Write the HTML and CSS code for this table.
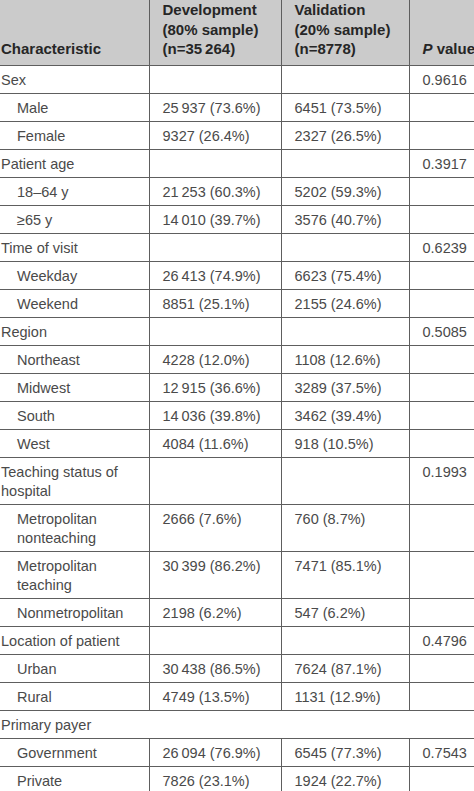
FILE: index.html
```html
<!DOCTYPE html>
<html>
<head>
<meta charset="utf-8">
<link rel="stylesheet" href="styles.css">
</head>
<body>
<table class="tbl">
  <colgroup>
    <col class="c1"><col class="c2"><col class="c3"><col class="c4">
  </colgroup>
  <thead>
    <tr>
      <th>Characteristic</th>
      <th>Development (80% sample) (n=35&#8201;264)</th>
      <th>Validation (20% sample) (n=8778)</th>
      <th class="pval"><i>P</i> value</th>
    </tr>
  </thead>
  <tbody>
    <tr><td class="grp">Sex</td><td></td><td></td><td>0.9616</td></tr>
    <tr><td class="sub">Male</td><td>25&#8201;937 (73.6%)</td><td>6451 (73.5%)</td><td></td></tr>
    <tr><td class="sub">Female</td><td>9327 (26.4%)</td><td>2327 (26.5%)</td><td></td></tr>
    <tr><td class="grp">Patient age</td><td></td><td></td><td>0.3917</td></tr>
    <tr><td class="sub">18–64 y</td><td>21&#8201;253 (60.3%)</td><td>5202 (59.3%)</td><td></td></tr>
    <tr><td class="sub">≥65 y</td><td>14&#8201;010 (39.7%)</td><td>3576 (40.7%)</td><td></td></tr>
    <tr><td class="grp">Time of visit</td><td></td><td></td><td>0.6239</td></tr>
    <tr><td class="sub">Weekday</td><td>26&#8201;413 (74.9%)</td><td>6623 (75.4%)</td><td></td></tr>
    <tr><td class="sub">Weekend</td><td>8851 (25.1%)</td><td>2155 (24.6%)</td><td></td></tr>
    <tr><td class="grp">Region</td><td></td><td></td><td>0.5085</td></tr>
    <tr><td class="sub">Northeast</td><td>4228 (12.0%)</td><td>1108 (12.6%)</td><td></td></tr>
    <tr><td class="sub">Midwest</td><td>12&#8201;915 (36.6%)</td><td>3289 (37.5%)</td><td></td></tr>
    <tr><td class="sub">South</td><td>14&#8201;036 (39.8%)</td><td>3462 (39.4%)</td><td></td></tr>
    <tr><td class="sub">West</td><td>4084 (11.6%)</td><td>918 (10.5%)</td><td></td></tr>
    <tr><td class="grp">Teaching status of hospital</td><td></td><td></td><td>0.1993</td></tr>
    <tr><td class="sub">Metropolitan nonteaching</td><td>2666 (7.6%)</td><td>760 (8.7%)</td><td></td></tr>
    <tr><td class="sub">Metropolitan teaching</td><td>30&#8201;399 (86.2%)</td><td>7471 (85.1%)</td><td></td></tr>
    <tr><td class="sub">Nonmetropolitan</td><td>2198 (6.2%)</td><td>547 (6.2%)</td><td></td></tr>
    <tr><td class="grp">Location of patient</td><td></td><td></td><td>0.4796</td></tr>
    <tr><td class="sub">Urban</td><td>30&#8201;438 (86.5%)</td><td>7624 (87.1%)</td><td></td></tr>
    <tr><td class="sub">Rural</td><td>4749 (13.5%)</td><td>1131 (12.9%)</td><td></td></tr>
    <tr class="span-row"><td class="grp" colspan="4">Primary payer</td></tr>
    <tr><td class="sub">Government</td><td>26&#8201;094 (76.9%)</td><td>6545 (77.3%)</td><td>0.7543</td></tr>
    <tr><td class="sub">Private</td><td>7826 (23.1%)</td><td>1924 (22.7%)</td><td></td></tr>
  </tbody>
</table>
</body>
</html>
```
FILE: styles.css
```css
html, body {
  margin: 0;
  padding: 0;
  background: #ffffff;
}

.tbl {
  width: 474px;
  border-collapse: collapse;
  table-layout: fixed;
  font-family: "Liberation Sans", Arial, sans-serif;
  font-size: 14.5px;
  color: #4a4a4a;
}

.c1 { width: 149px; }
.c2 { width: 132px; }
.c3 { width: 128px; }
.c4 { width: 65px; }

.tbl th {
  background: #cbcbcb;
  color: #262626;
  font-size: 15px;
  font-weight: bold;
  text-align: left;
  vertical-align: bottom;
  line-height: 19.5px;
  height: 65px;
  padding: 0 4px 6.5px 13px;
  box-sizing: border-box;
  border-left: 1px solid #5e5e5e;
  border-bottom: 1px solid #5e5e5e;
}

.tbl th:first-child {
  border-left: none;
  padding-left: 1px;
}

.tbl th.pval {
  white-space: nowrap;
  padding-right: 0;
}

.tbl th i {
  font-style: italic;
}

.tbl td {
  line-height: 19px;
  padding: 5px 4px 3px 13px;
  vertical-align: top;
  border-left: 1px solid #5e5e5e;
  border-bottom: 1px solid #5e5e5e;
}

.tbl td:first-child {
  border-left: none;
}

.tbl td.grp {
  padding-left: 1px;
}

.tbl td.sub {
  padding-left: 17px;
}
```
